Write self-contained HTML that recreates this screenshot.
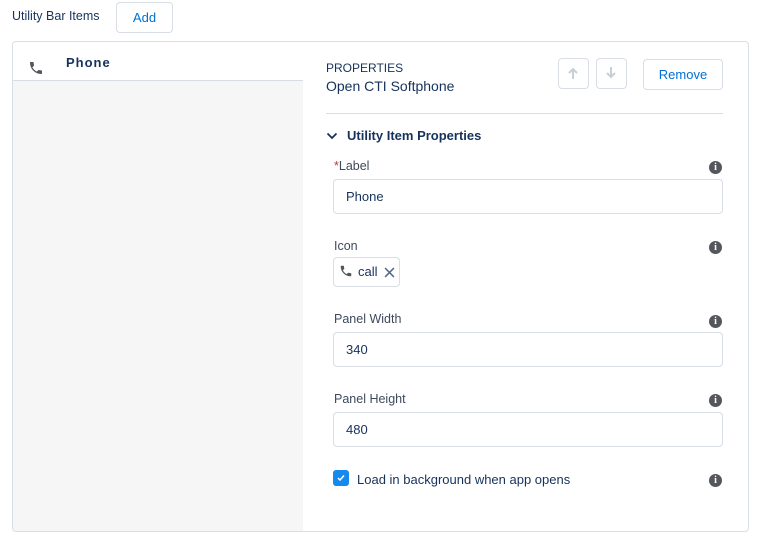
<!DOCTYPE html>
<html><head><style>
*{box-sizing:border-box;margin:0;padding:0}
body{width:768px;height:550px;background:#fff;font-family:"Liberation Sans",sans-serif;color:#16325c;position:relative;overflow:hidden;font-size:13px}
.a{position:absolute}
.btn{position:absolute;border:1px solid #d8dde6;border-radius:4px;background:#fff;color:#0070d2;text-align:center}
.inp{position:absolute;left:333px;width:390px;height:35px;border:1px solid #d8dde6;border-radius:4px;padding:9px 12px;font-size:13px;color:#16325c}
.lbl{position:absolute;left:334px;font-size:12.5px;color:#3e4a5c}
.info{position:absolute;left:709px;width:13px;height:13px;border-radius:50%;background:#54575c;color:#fff;font-size:10px;font-weight:bold;text-align:center;line-height:13px;font-family:"Liberation Serif",serif}
</style></head><body>
<div class="a" style="left:12px;top:9px;font-size:12.5px;color:#16325c">Utility Bar Items</div>
<div class="btn" style="left:116px;top:2px;width:57px;height:31px;line-height:29px;font-size:13px">Add</div>
<div class="a" style="left:12px;top:41px;width:737px;height:491px;border:1px solid #d8dde6;border-radius:4px;overflow:hidden">
  <div class="a" style="left:0;top:0;width:290px;height:491px;background:#f6f6f6"></div>
  <div class="a" style="left:0;top:0;width:290px;height:39px;background:#fff;border-bottom:1px solid #d8dde6"></div>
</div>
<svg class="a" style="left:28px;top:60px" width="16" height="16" viewBox="0 0 24 24"><path fill="#54575c" d="M6.6 10.8c1.4 2.8 3.8 5.1 6.6 6.6l2.2-2.2c.3-.3.7-.4 1-.2 1.1.4 2.300.6 3.6.6.6 0 1 .4 1 1V20c0 .6-.4 1-1 1C10.6 21 3 13.4 3 4c0-.6.4-1 1-1h3.5c.6 0 1 .4 1 1 0 1.3.2 2.5.6 3.6.1.3 0 .7-.2 1z"/></svg>
<div class="a" style="left:66px;top:55px;font-size:13px;font-weight:bold;letter-spacing:1px;color:#16325c">Phone</div>
<div class="a" style="left:326px;top:61px;font-size:12px;color:#16325c">PROPERTIES</div>
<div class="a" style="left:326px;top:78px;font-size:14px;color:#16325c">Open CTI Softphone</div>
<div class="btn" style="left:558px;top:58px;width:31px;height:31px"></div>
<svg class="a" style="left:567px;top:67px" width="12" height="13" viewBox="0 0 12 13"><path d="M6 12V2M2 6l4-4 4 4" stroke="#c9ced6" stroke-width="2" fill="none"/></svg>
<div class="btn" style="left:596px;top:58px;width:31px;height:31px"></div>
<svg class="a" style="left:605px;top:66px" width="12" height="13" viewBox="0 0 12 13"><path d="M6 1v10M2 7l4 4 4-4" stroke="#c9ced6" stroke-width="2" fill="none"/></svg>
<div class="btn" style="left:643px;top:59px;width:80px;height:31px;line-height:29px;font-size:13px">Remove</div>
<div class="a" style="left:326px;top:113px;width:397px;height:1px;background:#d8dde6"></div>
<svg class="a" style="left:326px;top:131px" width="12" height="10" viewBox="0 0 12 10"><path d="M1.5 2.5L6 7l4.5-4.5" stroke="#16325c" stroke-width="1.8" fill="none"/></svg>
<div class="a" style="left:347px;top:128px;font-size:13px;font-weight:bold;color:#16325c">Utility Item Properties</div>
<div class="lbl" style="top:159px"><span style="color:#c23934">*</span>Label</div>
<div class="info" style="top:161px">i</div>
<div class="inp" style="top:179px">Phone</div>
<div class="lbl" style="top:239px">Icon</div>
<div class="info" style="top:241px">i</div>
<div class="a" style="left:333px;top:257px;width:67px;height:30px;border:1px solid #d8dde6;border-radius:4px"></div>
<svg class="a" style="left:339px;top:264px" width="14" height="14" viewBox="0 0 24 24"><path fill="#54575c" d="M6.6 10.8c1.4 2.8 3.8 5.1 6.6 6.6l2.2-2.2c.3-.3.7-.4 1-.2 1.1.4 2.300.6 3.6.6.6 0 1 .4 1 1V20c0 .6-.4 1-1 1C10.6 21 3 13.4 3 4c0-.6.4-1 1-1h3.5c.6 0 1 .4 1 1 0 1.3.2 2.5.6 3.6.1.3 0 .7-.2 1z"/></svg>
<div class="a" style="left:358px;top:264px;font-size:13px">call</div>
<svg class="a" style="left:384px;top:267px" width="11" height="11" viewBox="0 0 10 10"><path d="M1 1L9 9M9 1L1 9" stroke="#54698d" stroke-width="1.4"/></svg>
<div class="lbl" style="top:312px">Panel Width</div>
<div class="info" style="top:315px">i</div>
<div class="inp" style="top:332px">340</div>
<div class="lbl" style="top:392px">Panel Height</div>
<div class="info" style="top:394px">i</div>
<div class="inp" style="top:412px">480</div>
<div class="a" style="left:333px;top:470px;width:16px;height:16px;border-radius:3px;background:#1589ee"></div>
<svg class="a" style="left:336px;top:473px" width="10" height="10" viewBox="0 0 10 10"><path d="M2 5l2 2 4-4.5" stroke="#fff" stroke-width="1.5" fill="none"/></svg>
<div class="a" style="left:357px;top:472px;font-size:13px;color:#16325c">Load in background when app opens</div>
<div class="info" style="top:474px">i</div>
</body></html>
